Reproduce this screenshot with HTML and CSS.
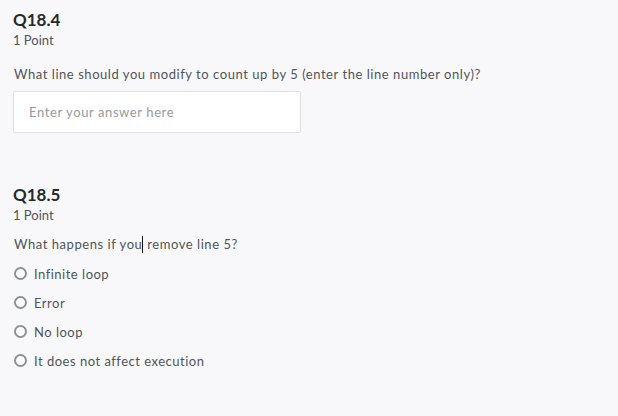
FILE: index.html
```
<!DOCTYPE html>
<html>
<head>
<meta charset="utf-8">
<link rel="stylesheet" href="styles.css">
</head>
<body>
<main class="quiz">
  <section class="question">
    <h2 class="q-title">Q18.4</h2>
    <div class="q-points">1 Point</div>
    <p class="q-text">What line should you modify to count up by 5 (enter the line number only)?</p>
    <input class="answer" type="text" placeholder="Enter your answer here">
  </section>
  <section class="question second">
    <h2 class="q-title">Q18.5</h2>
    <div class="q-points">1 Point</div>
    <p class="q-text">What happens if you<span class="caret"></span> remove line 5?</p>
    <ul class="options">
      <li class="option"><span class="radio"></span>Infinite loop</li>
      <li class="option"><span class="radio"></span>Error</li>
      <li class="option"><span class="radio"></span>No loop</li>
      <li class="option"><span class="radio"></span>It does not affect execution</li>
    </ul>
  </section>
</main>
</body>
</html>
```
FILE: styles.css
```
html, body {
  margin: 0;
  background: #f8f8fb;
}
body {
  font-family: "Lato", "Open Sans", sans-serif;
  color: #505558;
}
.quiz {
  padding: 9px 13px 0 13px;
}
.q-title {
  margin: 0;
  font-size: 17px;
  font-weight: 700;
  color: #1f2b2b;
  line-height: 22px;
}
.q-points {
  font-size: 13px;
  line-height: 16px;
  margin-top: 1px;
  color: #505558;
}
.q-text {
  margin: 17px 0 0 1px;
  font-size: 13px;
  line-height: 18px;
  letter-spacing: 0.55px;
}
.answer {
  display: block;
  margin-top: 8px;
  width: 288px;
  height: 42px;
  box-sizing: border-box;
  border: 1px solid #dfe1e6;
  border-radius: 2px;
  background: #fff;
  padding: 0 15px;
  font-family: "Lato", sans-serif;
  font-size: 13px;
  letter-spacing: 0.6px;
  color: #505558;
}
.answer::placeholder {
  color: #969a9e;
}
.second {
  margin-top: 51px;
}
.second .q-text {
  margin-top: 12px;
}
.caret {
  display: inline-block;
  width: 1px;
  height: 17px;
  background: #111;
  vertical-align: -4px;
}
.options {
  list-style: none;
  margin: 6px 0 0 1px;
  padding: 0;
}
.option {
  display: flex;
  align-items: center;
  gap: 7px;
  height: 29px;
  font-size: 13px;
  letter-spacing: 0.5px;
}
.radio {
  width: 13px;
  height: 13px;
  box-sizing: border-box;
  border: 2px solid #8c9193;
  border-radius: 50%;
  background: #fff;
}
```
